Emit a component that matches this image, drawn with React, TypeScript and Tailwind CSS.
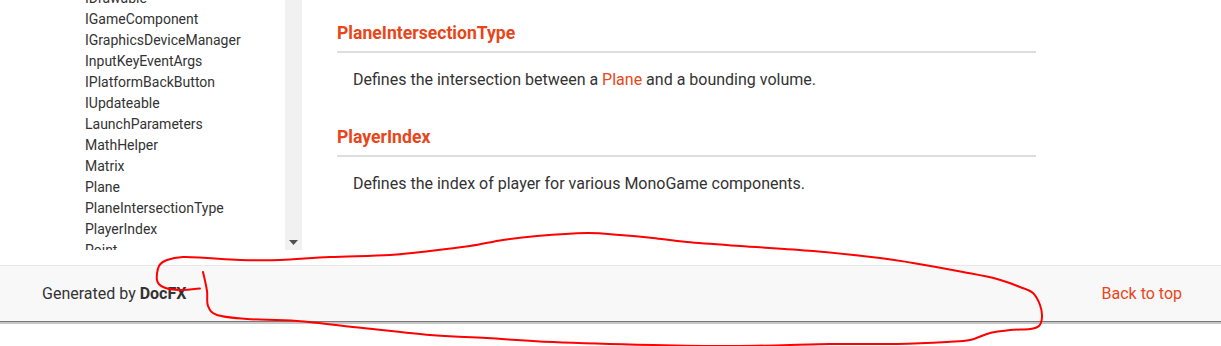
const TOC = [
  'IDrawable',
  'IGameComponent',
  'IGraphicsDeviceManager',
  'InputKeyEventArgs',
  'IPlatformBackButton',
  'IUpdateable',
  'LaunchParameters',
  'MathHelper',
  'Matrix',
  'Plane',
  'PlaneIntersectionType',
  'PlayerIndex',
  'Point',
];

// freehand marker loop drawn over the screenshot
const SCRIBBLE: [number, number][] = [
  [200, 288.5], [180, 290], [163, 287], [157, 280], [159, 266], [167, 260], [183, 257],
  [207, 258], [240, 260], [280, 260], [330, 257], [390, 255], [430, 251], [470, 246],
  [503, 240], [537, 236], [587, 233], [620, 235], [653, 238], [687, 242], [740, 246],
  [813, 251], [880, 258], [913, 263], [963, 272], [997, 279], [1020, 287], [1033, 293],
  [1040, 305], [1042, 317], [1039, 326], [1030, 329], [1010, 330], [990, 333], [970, 340],
  [947, 342], [897, 344], [830, 344], [740, 346], [653, 345], [553, 342], [487, 338],
  [430, 335], [363, 328], [297, 321], [247, 319], [217, 315], [208, 306], [207, 291], [203, 272],
];

function smoothPath(pts: [number, number][]) {
  let d = `M${pts[0][0]} ${pts[0][1]}`;
  for (let i = 0; i < pts.length - 1; i++) {
    const p0 = pts[i - 1] ?? pts[i];
    const p1 = pts[i];
    const p2 = pts[i + 1];
    const p3 = pts[i + 2] ?? p2;
    const c1x = p1[0] + (p2[0] - p0[0]) / 6;
    const c1y = p1[1] + (p2[1] - p0[1]) / 6;
    const c2x = p2[0] - (p3[0] - p1[0]) / 6;
    const c2y = p2[1] - (p3[1] - p1[1]) / 6;
    d += ` C${c1x.toFixed(1)} ${c1y.toFixed(1)} ${c2x.toFixed(1)} ${c2y.toFixed(1)} ${p2[0]} ${p2[1]}`;
  }
  return d;
}

function Section({ title, children }: { title: string; children: React.ReactNode }) {
  return (
    <div>
      <h3 className="h-[24px] leading-[24px] pb-[6px] box-content border-b-2 border-[#dddddd] text-[17.6px] font-bold text-[#e8461a]">
        {title}
      </h3>
      <p className="mt-[16px] ml-[16px] text-[16px] leading-[21px] text-[#333333]">{children}</p>
    </div>
  );
}

export default function App() {
  return (
    <div className="relative h-[346px] bg-white overflow-hidden" style={{ fontFamily: 'Roboto, "Liberation Sans", sans-serif' }}>
      <div className="flex h-[250px]">
        <div className="flex w-[302px] shrink-0">
          <div className="flex-1 overflow-hidden pl-[85px]">
            <ul className="mt-[-12px]">
              {TOC.map((item) => (
                <li key={item} className="h-[21px] leading-[21px] text-[14px] text-[#333333] whitespace-nowrap">
                  {item}
                </li>
              ))}
            </ul>
          </div>
          <div className="w-[17px] bg-[#f1f1f1] flex flex-col justify-end items-center pb-[5px]">
            <svg width="9" height="5" viewBox="0 0 9 5">
              <path d="M0 0h9L4.5 5z" fill="#505050" />
            </svg>
          </div>
        </div>
        <main className="ml-[35px] w-[699px] pt-[21px]">
          <Section title="PlaneIntersectionType">
            Defines the intersection between a <span className="text-[#e8461a]">Plane</span> and a bounding volume.
          </Section>
          <div className="mt-[35px]">
            <Section title="PlayerIndex">Defines the index of player for various MonoGame components.</Section>
          </div>
        </main>
      </div>

      <footer className="mt-[15px] h-[57px] border-t border-[#e7e7e7] border-b border-b-[#777777] bg-[#f8f8f8] shadow-[0_2px_0_#c6c6c6] flex items-center justify-between pl-[42px] pr-[39px] text-[16px]">
        <span className="text-[#333333]">
          Generated by <strong className="font-bold text-[#333333]">DocFX</strong>
        </span>
        <span className="text-[#e8461a]">Back to top</span>
      </footer>

      <svg className="absolute inset-0 pointer-events-none" width="1221" height="346" viewBox="0 0 1221 346">
        <path d={smoothPath(SCRIBBLE)} fill="none" stroke="#ff0000" strokeWidth={2} strokeLinecap="round" strokeLinejoin="round" />
      </svg>
    </div>
  );
}
